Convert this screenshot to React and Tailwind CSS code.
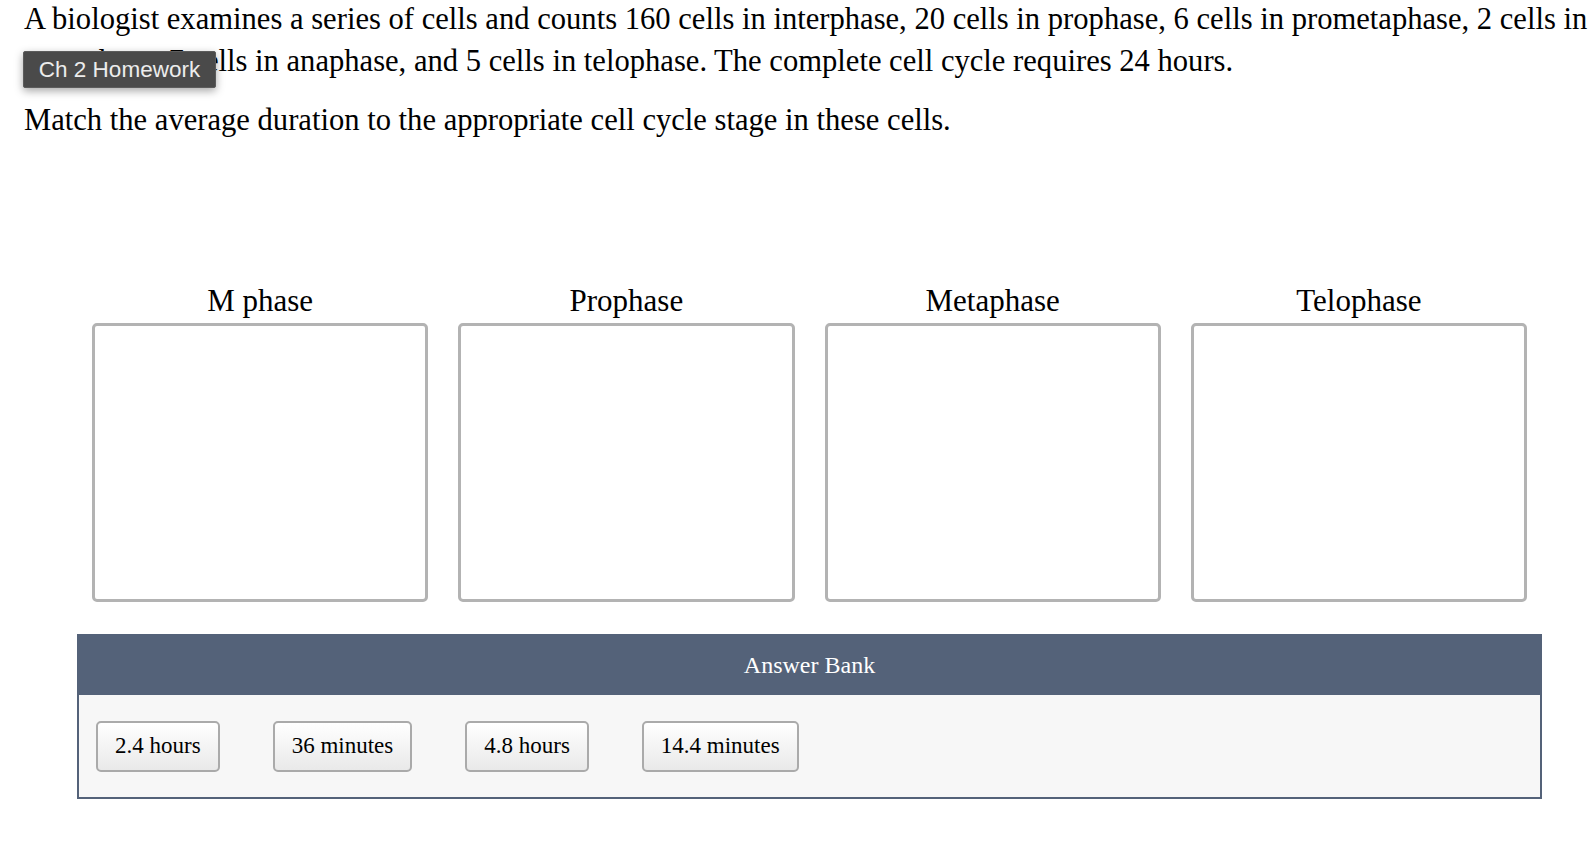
import React from "react";

const stages = ["M phase", "Prophase", "Metaphase", "Telophase"];
const answers = ["2.4 hours", "36 minutes", "4.8 hours", "14.4 minutes"];

const serif = { fontFamily: '"Liberation Serif", "Times New Roman", serif' };

const App = () => {
  return (
    <div className="relative min-h-screen bg-white text-black overflow-hidden" style={serif}>
      {/* Question text */}
      <div className="pl-[24px] w-[1610px] mt-[-2px]">
        <p className="text-[30.6px] leading-[42px]">
          A biologist examines a series of cells and counts 160 cells in interphase, 20 cells in prophase, 6 cells
          in prometaphase, 2 cells in metaphase, 7 cells in anaphase, and 5 cells in telophase. The complete cell
          cycle requires 24 hours.
        </p>
        <p className="text-[30.6px] leading-[42px] mt-[17px]">
          Match the average duration to the appropriate cell cycle stage in these cells.
        </p>
      </div>

      {/* Tooltip */}
      <div
        className="absolute left-[23px] top-[51px] w-[193px] h-[37px] flex items-center justify-center bg-[#4a4a4a] border border-[#5c5c5c] rounded-[2px] text-[#ececec] text-[22.5px] shadow-[0_3px_8px_rgba(0,0,0,0.35)]"
        style={{ fontFamily: '"Liberation Sans", Arial, sans-serif' }}
      >
        Ch 2 Homework
      </div>

      {/* Drop targets */}
      <div className="ml-[77px] w-[1465px] mt-[143px] px-[15px]">
        <div className="grid grid-cols-4 gap-x-[30px]">
          {stages.map((s) => (
            <div key={s} className="flex flex-col">
              <div className="text-center text-[31px] leading-[34px] mb-[5px]">{s}</div>
              <div className="h-[279px] border-[3px] border-[#b3b3b3] rounded-[5px] bg-white" />
            </div>
          ))}
        </div>
      </div>

      {/* Answer bank */}
      <div className="ml-[77px] w-[1465px] mt-[32px]">
        <div className="h-[61px] bg-[#546279] flex items-center justify-center text-white text-[24px]">
          Answer Bank
        </div>
        <div className="bg-[#f7f7f7] border-2 border-t-0 border-[#546279] pl-[17px] pt-[26px] pb-[25px] flex gap-[53px]">
          {answers.map((a) => (
            <div
              key={a}
              className="h-[51px] px-[17px] flex items-center border-2 border-[#aaaaaa] rounded-[5px] bg-gradient-to-b from-white to-[#e9e9e9] text-[23px]"
            >
              {a}
            </div>
          ))}
        </div>
      </div>
    </div>
  );
};

export default App;
